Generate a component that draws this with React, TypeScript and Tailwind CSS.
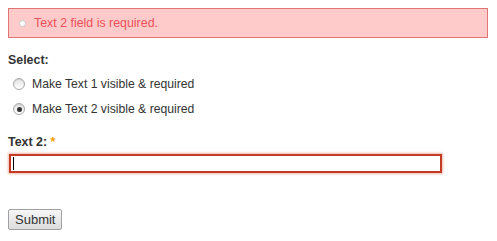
import React from "react";

function Radio({ checked }: { checked?: boolean }) {
  return (
    <span className="inline-flex h-[12px] w-[12px] items-center justify-center rounded-full border border-[#a8a8a8] bg-gradient-to-b from-[#e4e4e4] to-[#ffffff] shadow-[inset_0_1px_1px_rgba(0,0,0,0.1)]">
      {checked && <span className="block h-[5px] w-[5px] rounded-full bg-[#333]" />}
    </span>
  );
}

export default function App() {
  return (
    <div className="min-h-[241px] w-[497px] bg-white px-2 pt-2 text-[12.4px] text-[#333] [font-family:'Liberation_Sans',Arial,sans-serif]">
      <div className="flex h-[30px] w-[480px] items-center border border-[#e07576] bg-[#ffcaca] pl-[10px] text-[#e9525a]">
        <span className="mr-[8px] inline-block h-[7px] w-[7px] rounded-full border border-[#c8c8c8] bg-white" />
        <span>Text 2 field is required.</span>
      </div>
      <div className="mt-[13px] font-bold text-[#333]">Select:</div>
      <div className="mt-[7px] flex flex-col gap-[10px] pl-[5px] text-[#333]">
        <label className="flex h-[15px] items-center gap-[7px]">
          <Radio />
          <span className="text-[12.2px]">Make Text 1 visible &amp; required</span>
        </label>
        <label className="flex h-[15px] items-center gap-[7px]">
          <Radio checked />
          <span className="text-[12.2px]">Make Text 2 visible &amp; required</span>
        </label>
      </div>
      <div className="mt-[16px] font-bold text-[#333]">
        Text 2: <span className="text-[#f0a000]">*</span>
      </div>
      <div className="ml-[1px] mt-[3px] h-[19px] w-[433px] border-2 border-[#c23b22] bg-white pl-[2px] shadow-[0_0_2px_1px_rgba(224,120,90,0.5)]">
        <span className="mt-[1px] block h-[13px] w-[1px] bg-black" />
      </div>
      <button className="mt-[36px] h-[21px] rounded-[2px] border border-[#a0a0a0] bg-gradient-to-b from-[#f6f6f6] to-[#dddddd] px-[6px] text-[13px] text-[#333]">
        Submit
      </button>
    </div>
  );
}
